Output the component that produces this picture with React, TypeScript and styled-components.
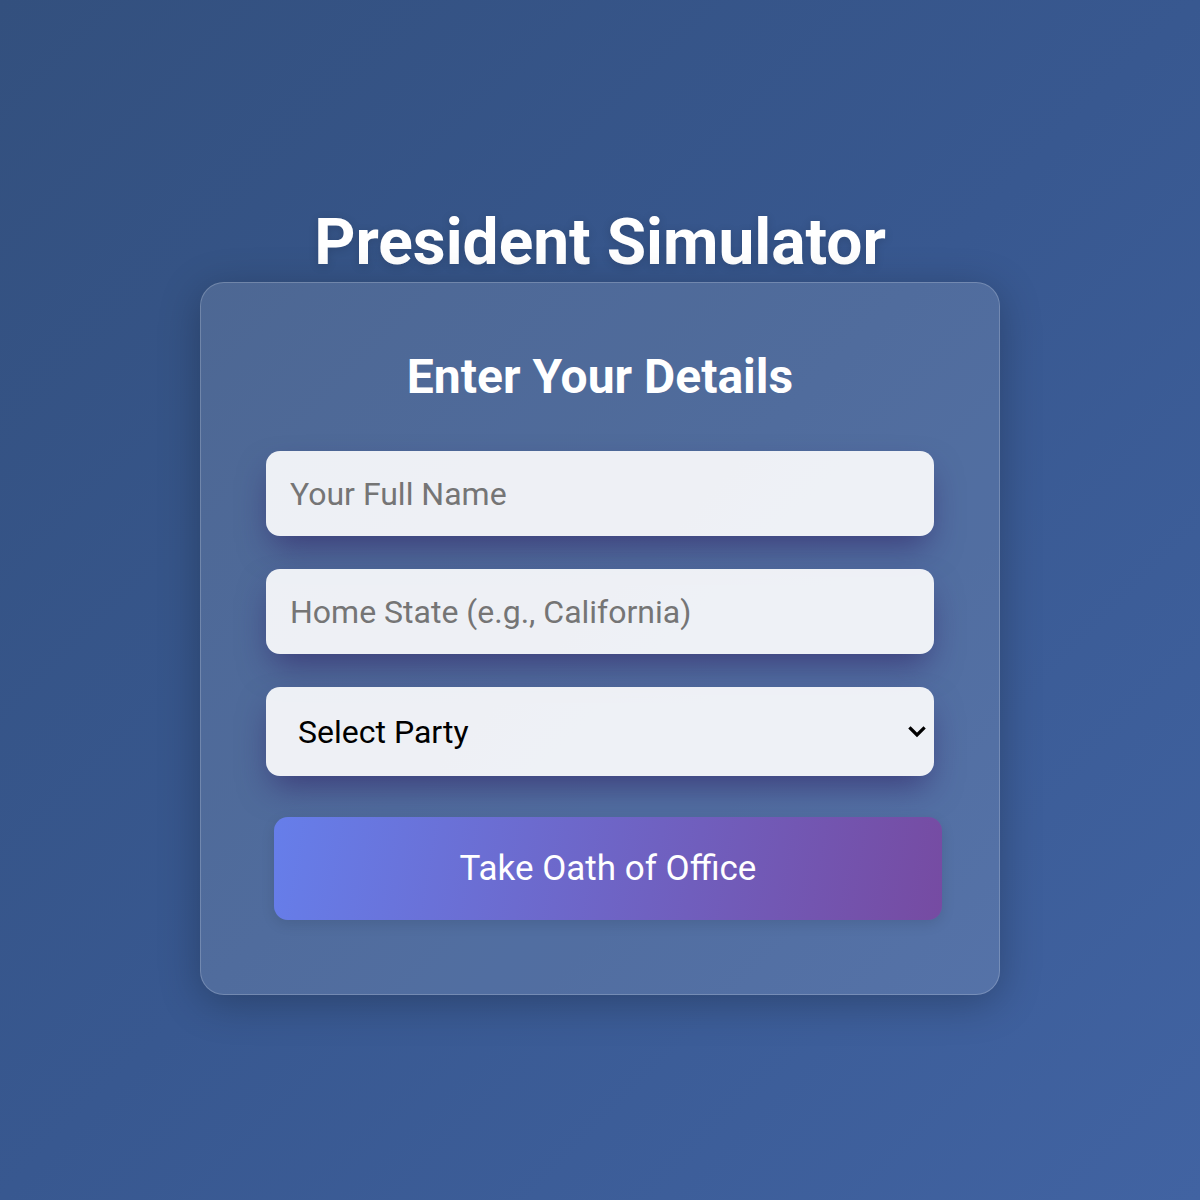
import styled, { createGlobalStyle } from "styled-components";

const GlobalStyle = createGlobalStyle`
	* {
		box-sizing: border-box;
	}
	html, body {
		margin: 0;
		padding: 0;
	}
	body {
		font-family: Roboto, "Liberation Sans", sans-serif;
		background: linear-gradient(135deg, #33507e 0%, #385890 50%, #4163a2 100%);
		min-height: 100vh;
		color: #fff;
	}
`

const Page = styled.div`
	min-height: 100vh;
	display: flex;
	flex-direction: column;
	align-items: center;
	justify-content: center;
`

const Title = styled.h1`
	font-size: 64px;
	font-weight: 700;
	margin: 0;
	line-height: 1.2;
	text-shadow: 0 2px 10px rgba(0, 0, 0, 0.15);
`

const Card = styled.div`
	width: 800px;
	padding: 65px 65px 74px;
	background: rgba(255, 255, 255, 0.12);
	border: 1px solid rgba(255, 255, 255, 0.2);
	border-radius: 24px;
	box-shadow: 0 8px 40px rgba(0, 0, 0, 0.25);
	display: flex;
	flex-direction: column;
`

const Heading = styled.h2`
	font-size: 48px;
	font-weight: 700;
	text-align: center;
	margin: 0 0 46px;
	line-height: 1.2;
`

const Field = styled.input`
	width: 100%;
	height: 85px;
	padding: 0 24px;
	border: none;
	border-radius: 14px;
	background: rgba(255, 255, 255, 0.9);
	font-family: Roboto, "Liberation Sans", sans-serif;
	font-size: 32px;
	color: #222;
	margin-bottom: 33px;
	box-shadow: 0 16px 32px -6px rgba(45, 25, 95, 0.55);
	outline: none;

	&::placeholder {
		color: #757575;
	}
`

const SelectWrap = styled.div`
	position: relative;
	margin-bottom: 41px;
	border-radius: 14px;
	box-shadow: 0 16px 32px -6px rgba(45, 25, 95, 0.55);
`

const Select = styled.select`
	width: 100%;
	height: 89px;
	padding: 0 48px 0 32px;
	border: none;
	border-radius: 14px;
	background: rgba(255, 255, 255, 0.9);
	font-family: Roboto, "Liberation Sans", sans-serif;
	font-size: 32px;
	color: #000;
	appearance: none;
	-webkit-appearance: none;
	outline: none;
	display: block;
`

const Chevron = styled.svg`
	position: absolute;
	right: 8px;
	top: 50%;
	width: 18px;
	height: 12px;
	margin-top: -6px;
	pointer-events: none;
`

const Button = styled.button`
	width: 100%;
	height: 103px;
	border: none;
	border-radius: 14px;
	background: linear-gradient(100deg, #667eea 0%, #764ba2 100%);
	color: #fff;
	font-family: Roboto, "Liberation Sans", sans-serif;
	font-size: 35px;
	font-weight: 400;
	cursor: pointer;
	transform: translateX(8px);
	box-shadow: 0 4px 14px rgba(0, 0, 0, 0.1);
`

export default function App() {
	return (
		<>
			<GlobalStyle />
			<Page>
				<Title>President Simulator</Title>
				<Card>
					<Heading>Enter Your Details</Heading>
					<Field placeholder="Your Full Name" />
					<Field placeholder="Home State (e.g., California)" />
					<SelectWrap>
						<Select defaultValue="">
							<option value="">Select Party</option>
							<option value="dem">Democratic</option>
							<option value="rep">Republican</option>
							<option value="ind">Independent</option>
						</Select>
						<Chevron viewBox="0 0 18 12">
							<path d="M2.5 2.5 L9 9 L15.5 2.5" fill="none" stroke="#000" strokeWidth="3.2" strokeLinecap="square" />
						</Chevron>
					</SelectWrap>
					<Button>Take Oath of Office</Button>
				</Card>
			</Page>
		</>
	);
}
